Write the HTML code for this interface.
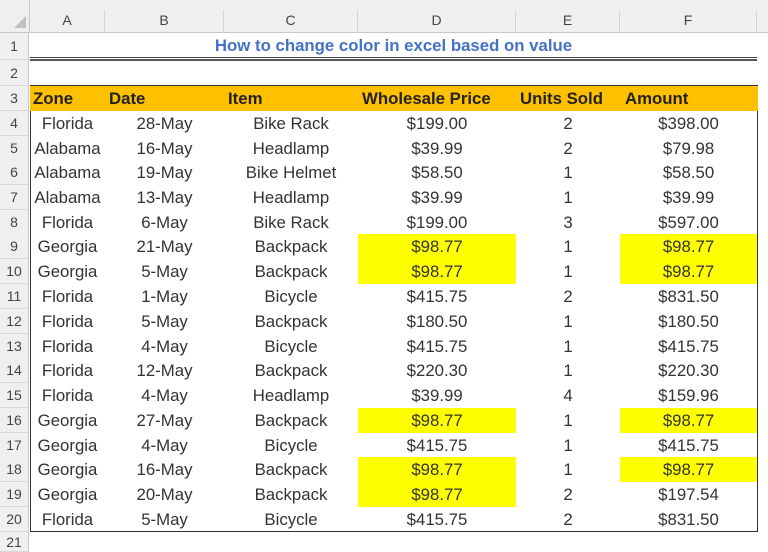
<!DOCTYPE html>
<html><head><style>
*{margin:0;padding:0;box-sizing:border-box}
body{width:768px;height:541px;background:#fff;position:relative;overflow:hidden;font-family:"Liberation Sans",sans-serif;color:#333}
.ch{position:absolute;top:0;height:33px;background:#efefef;border-bottom:1px solid #c8c8c8;width:768px}
.ch div{position:absolute;top:10px;height:23px;line-height:21px;text-align:center;font-size:14px;color:#444;border-right:1px solid #d4d4d4}
.rn{position:absolute;left:0;width:29px;background:#efefef;border-right:1px solid #c8c8c8;border-bottom:1px solid #d8d8d8;text-align:center;font-size:14px;color:#444}
.r{position:absolute;left:30px;width:728px;height:25px;font-size:16.8px}
.r span{position:absolute;top:0;line-height:25px;text-align:center;white-space:nowrap}
.a{left:0;width:75px}.b{left:75px;width:119px}.c{left:194px;width:134px}.d{left:328px;width:158px}.e{left:486px;width:104px}.f{left:590px;width:137px}
.y{background:#ffff00}
.h{background:#ffc000;font-weight:bold;color:#222;font-size:16.8px}
.h span{text-align:left}
</style></head><body>
<div class="ch">
<div style="left:0;width:30px;top:0;height:33px;border-right:1px solid #c8c8c8"><svg width="16" height="16" style="position:absolute;left:12px;top:14px"><polygon points="14,2 14,14 2,14" fill="#c0c0c0"/></svg></div>
<div style="left:30px;width:75px">A</div>
<div style="left:105px;width:119px">B</div>
<div style="left:224px;width:134px">C</div>
<div style="left:358px;width:158px">D</div>
<div style="left:516px;width:104px">E</div>
<div style="left:620px;width:137px">F</div>
</div>
<div class="rn" style="top:33px;height:27px;line-height:26px">1</div>
<div class="rn" style="top:60px;height:26px;line-height:26px">2</div>
<div style="position:absolute;left:30px;top:33px;width:727px;height:24px;text-align:center;line-height:26px;font-weight:bold;color:#4472c4;font-size:16.8px">How to change color in excel based on value</div>
<div style="position:absolute;left:30px;top:57px;width:727px;height:4px;border-top:1px solid #444;border-bottom:2px solid #555"></div>
<div style="position:absolute;left:30px;top:85px;width:728px;height:447px;border:1px solid #333;border-top:1.5px solid #333"></div>
<div class="rn" style="top:86px;height:25px;line-height:25px">3</div>
<div class="r h" style="top:86px"><span style="left:3px">Zone</span><span style="left:79px">Date</span><span style="left:198px">Item</span><span style="left:332px">Wholesale Price</span><span style="left:490px">Units Sold</span><span style="left:595px">Amount</span></div>

<div class="rn" style="top:111px;height:25px;line-height:25px">4</div>
<div class="r" style="top:111px"><span class="a">Florida</span><span class="b">28-May</span><span class="c">Bike Rack</span><span class="d">$199.00</span><span class="e">2</span><span class="f">$398.00</span></div>
<div class="rn" style="top:136px;height:25px;line-height:25px">5</div>
<div class="r" style="top:136px"><span class="a">Alabama</span><span class="b">16-May</span><span class="c">Headlamp</span><span class="d">$39.99</span><span class="e">2</span><span class="f">$79.98</span></div>
<div class="rn" style="top:160px;height:25px;line-height:25px">6</div>
<div class="r" style="top:160px"><span class="a">Alabama</span><span class="b">19-May</span><span class="c">Bike Helmet</span><span class="d">$58.50</span><span class="e">1</span><span class="f">$58.50</span></div>
<div class="rn" style="top:185px;height:25px;line-height:25px">7</div>
<div class="r" style="top:185px"><span class="a">Alabama</span><span class="b">13-May</span><span class="c">Headlamp</span><span class="d">$39.99</span><span class="e">1</span><span class="f">$39.99</span></div>
<div class="rn" style="top:210px;height:25px;line-height:25px">8</div>
<div class="r" style="top:210px"><span class="a">Florida</span><span class="b">6-May</span><span class="c">Bike Rack</span><span class="d">$199.00</span><span class="e">3</span><span class="f">$597.00</span></div>
<div class="rn" style="top:234px;height:25px;line-height:25px">9</div>
<div class="r" style="top:234px"><span class="a">Georgia</span><span class="b">21-May</span><span class="c">Backpack</span><span class="d y">$98.77</span><span class="e">1</span><span class="f y">$98.77</span></div>
<div class="rn" style="top:259px;height:25px;line-height:25px">10</div>
<div class="r" style="top:259px"><span class="a">Georgia</span><span class="b">5-May</span><span class="c">Backpack</span><span class="d y">$98.77</span><span class="e">1</span><span class="f y">$98.77</span></div>
<div class="rn" style="top:284px;height:25px;line-height:25px">11</div>
<div class="r" style="top:284px"><span class="a">Florida</span><span class="b">1-May</span><span class="c">Bicycle</span><span class="d">$415.75</span><span class="e">2</span><span class="f">$831.50</span></div>
<div class="rn" style="top:309px;height:25px;line-height:25px">12</div>
<div class="r" style="top:309px"><span class="a">Florida</span><span class="b">5-May</span><span class="c">Backpack</span><span class="d">$180.50</span><span class="e">1</span><span class="f">$180.50</span></div>
<div class="rn" style="top:334px;height:25px;line-height:25px">13</div>
<div class="r" style="top:334px"><span class="a">Florida</span><span class="b">4-May</span><span class="c">Bicycle</span><span class="d">$415.75</span><span class="e">1</span><span class="f">$415.75</span></div>
<div class="rn" style="top:358px;height:25px;line-height:25px">14</div>
<div class="r" style="top:358px"><span class="a">Florida</span><span class="b">12-May</span><span class="c">Backpack</span><span class="d">$220.30</span><span class="e">1</span><span class="f">$220.30</span></div>
<div class="rn" style="top:383px;height:25px;line-height:25px">15</div>
<div class="r" style="top:383px"><span class="a">Florida</span><span class="b">4-May</span><span class="c">Headlamp</span><span class="d">$39.99</span><span class="e">4</span><span class="f">$159.96</span></div>
<div class="rn" style="top:408px;height:25px;line-height:25px">16</div>
<div class="r" style="top:408px"><span class="a">Georgia</span><span class="b">27-May</span><span class="c">Backpack</span><span class="d y">$98.77</span><span class="e">1</span><span class="f y">$98.77</span></div>
<div class="rn" style="top:433px;height:25px;line-height:25px">17</div>
<div class="r" style="top:433px"><span class="a">Georgia</span><span class="b">4-May</span><span class="c">Bicycle</span><span class="d">$415.75</span><span class="e">1</span><span class="f">$415.75</span></div>
<div class="rn" style="top:457px;height:25px;line-height:25px">18</div>
<div class="r" style="top:457px"><span class="a">Georgia</span><span class="b">16-May</span><span class="c">Backpack</span><span class="d y">$98.77</span><span class="e">1</span><span class="f y">$98.77</span></div>
<div class="rn" style="top:482px;height:25px;line-height:25px">19</div>
<div class="r" style="top:482px"><span class="a">Georgia</span><span class="b">20-May</span><span class="c">Backpack</span><span class="d y">$98.77</span><span class="e">2</span><span class="f">$197.54</span></div>
<div class="rn" style="top:507px;height:25px;line-height:25px">20</div>
<div class="r" style="top:507px"><span class="a">Florida</span><span class="b">5-May</span><span class="c">Bicycle</span><span class="d">$415.75</span><span class="e">2</span><span class="f">$831.50</span></div>
<div class="rn" style="top:532px;height:20px;line-height:20px">21</div>
</body></html>
